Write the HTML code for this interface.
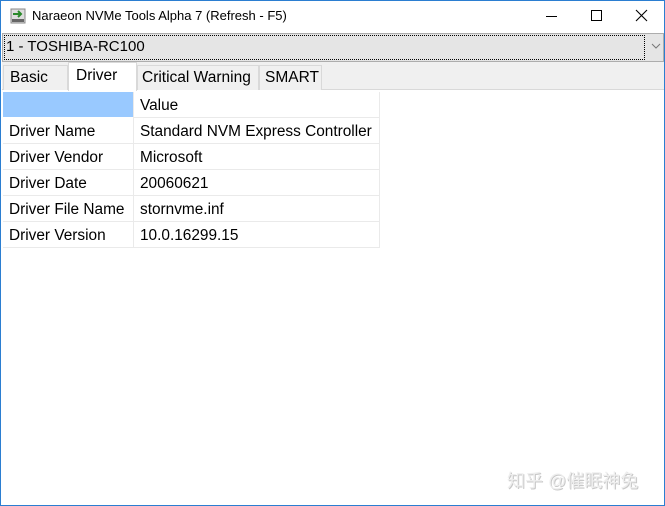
<!DOCTYPE html>
<html><head><style>
*{margin:0;padding:0;box-sizing:border-box}
body{width:665px;height:506px;overflow:hidden;background:#fff;font-family:"Liberation Sans","Noto Sans CJK SC",sans-serif;position:relative}
.win{position:absolute;left:0;top:0;width:665px;height:506px;border:1px solid #2b7ed1;background:#fff}
.t{position:absolute;white-space:nowrap;color:#000}
.cell{position:absolute;border-right:1px solid #eaeaea;border-bottom:1px solid #eaeaea;font-size:15.4px;padding-left:6px;line-height:27px;color:#000}
</style></head><body><div class="win">
<svg style="position:absolute;left:9px;top:7px" width="16" height="16"><rect x="1" y="1" width="14" height="14" fill="#ddd" stroke="#888"/><path d="M3 6h8M8 3l3 3-3 3" stroke="#2a8a2a" stroke-width="2" fill="none"/><rect x="2" y="11" width="12" height="3" fill="#666"/></svg>
<div class="t" style="left:31px;top:7px;font-size:13px">Naraeon NVMe Tools Alpha 7 (Refresh - F5)</div>
<div style="position:absolute;left:545px;top:15px;width:11px;height:1px;background:#000"></div>
<div style="position:absolute;left:590px;top:9px;width:11px;height:11px;border:1px solid #000"></div>
<svg style="position:absolute;left:634px;top:8px" width="13" height="13"><path d="M1 1L12 12M12 1L1 12" stroke="#000" stroke-width="1.1"/></svg>
<div style="position:absolute;left:1px;top:32px;width:662px;height:29px;background:#e5e5e5;border:1px solid #adadad"></div>
<div style="position:absolute;left:3px;top:34px;width:641px;height:25px;border:1px dotted #000"></div>
<div class="t" style="left:5px;top:37px;font-size:15px">1 - TOSHIBA-RC100</div>
<svg style="position:absolute;left:650px;top:42px" width="10" height="7"><path d="M1 1l4 4 4-4" stroke="#777" fill="none"/></svg>
<div style="position:absolute;left:1px;top:61px;width:662px;height:28px;background:#f0f0f0;border-bottom:1px solid #d9d9d9"></div>
<div style="position:absolute;left:2px;top:64px;width:65px;height:25px;border:1px solid #d9d9d9;border-bottom:none;background:#f0f0f0"></div>
<div style="position:absolute;left:67px;top:61px;width:69px;height:29px;border:1px solid #d9d9d9;border-bottom:none;background:#fff"></div>
<div style="position:absolute;left:136px;top:64px;width:122px;height:25px;border:1px solid #d9d9d9;border-bottom:none;background:#f0f0f0"></div>
<div style="position:absolute;left:258px;top:64px;width:63px;height:25px;border:1px solid #d9d9d9;border-bottom:none;background:#f0f0f0"></div>
<div class="t" style="left:9px;top:68px;font-size:15.5px">Basic</div>
<div class="t" style="left:75px;top:66px;font-size:15.5px">Driver</div>
<div class="t" style="left:141px;top:68px;font-size:15.5px">Critical Warning</div>
<div class="t" style="left:264px;top:68px;font-size:15.5px">SMART</div>
<div style="position:absolute;left:2px;top:91px;width:130px;height:25px;background:#99c9ff"></div>
<div class="cell" style="left:132px;top:91px;width:247px;height:26px;border-left:1px solid #eaeaea">Value</div>
<div class="cell" style="left:2px;top:117px;width:131px;height:26px">Driver Name</div>
<div class="cell" style="left:132px;top:117px;width:247px;height:26px;border-left:1px solid #eaeaea">Standard NVM Express Controller</div>
<div class="cell" style="left:2px;top:143px;width:131px;height:26px">Driver Vendor</div>
<div class="cell" style="left:132px;top:143px;width:247px;height:26px;border-left:1px solid #eaeaea">Microsoft</div>
<div class="cell" style="left:2px;top:169px;width:131px;height:26px">Driver Date</div>
<div class="cell" style="left:132px;top:169px;width:247px;height:26px;border-left:1px solid #eaeaea">20060621</div>
<div class="cell" style="left:2px;top:195px;width:131px;height:26px">Driver File Name</div>
<div class="cell" style="left:132px;top:195px;width:247px;height:26px;border-left:1px solid #eaeaea">stornvme.inf</div>
<div class="cell" style="left:2px;top:221px;width:131px;height:26px">Driver Version</div>
<div class="cell" style="left:132px;top:221px;width:247px;height:26px;border-left:1px solid #eaeaea">10.0.16299.15</div>
<div class="t" style="left:506px;top:466px;font-size:18px;color:#eeeeee;text-shadow:1px 1px 0 #c8c8c8">知乎 @催眠神兔</div>
</div></body></html>
